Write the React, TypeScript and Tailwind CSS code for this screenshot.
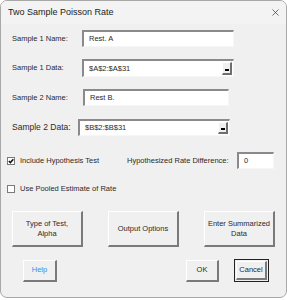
import { X } from 'lucide-react';

const font = { fontFamily: '"Liberation Sans", Arial, sans-serif' };

function TextBox({ value, w, h = 'h-[17px]', picker = false }: { value: string; w: string; h?: string; picker?: boolean }) {
  return (
    <div
      className={`${w} ${h} flex items-stretch bg-white border-t-2 border-l-2 border-b border-r border-t-[#8a8a8a] border-l-[#8a8a8a] border-b-[#f6f6f6] border-r-[#f6f6f6]`}
    >
      <span className="flex-1 pl-[5px] text-[7.5px] leading-none flex items-center text-[#2a2a2a]">{value}</span>
      {picker && (
        <span className="w-[10px] my-[1px] mr-[1px] bg-[#f0f0f0] border-t border-l border-b-2 border-r-2 border-t-white border-l-white border-b-[#6e6e6e] border-r-[#6e6e6e] flex items-end justify-center pb-[2px]">
          <span className="w-[4px] h-[2px] bg-black" />
        </span>
      )}
    </div>
  );
}

function CheckBox({ checked, label }: { checked: boolean; label: string }) {
  return (
    <div className="flex items-center gap-[5px]">
      <span className="w-[8px] h-[8px] bg-white border border-[#7a7a7a] flex items-center justify-center">
        {checked && (
          <svg width="6" height="6" viewBox="0 0 6 6">
            <path d="M0.8 3 L2.4 4.6 L5.3 1.2" stroke="#111" strokeWidth="1.5" fill="none" />
          </svg>
        )}
      </span>
      <span className="text-[7.5px] leading-none text-[#2a2a2a]">{label}</span>
    </div>
  );
}

function Btn({ children, className }: { children: React.ReactNode; className: string }) {
  return (
    <div
      className={`${className} flex items-center justify-center text-center bg-[#f0f0f0] border-t border-l border-b-2 border-r-2 border-t-white border-l-white border-b-[#7a7a7a] border-r-[#7a7a7a] text-[7.5px] leading-[10px]`}
    >
      {children}
    </div>
  );
}

export default function App() {
  return (
    <div className="w-[287px] h-[300px] bg-white" style={font}>
      <div className="w-[287px] h-[298px] rounded-[7px] border border-[#a8a8a8] bg-[#f0f0f0] overflow-hidden flex flex-col">
        <div className="h-[23px] bg-[#f3f3f3] flex items-center justify-between pl-[7px] pr-[5px]">
          <span className="text-[9px] text-[#222]">Two Sample Poisson Rate</span>
          <X className="w-[11px] h-[11px] text-[#333]" strokeWidth={1.5} />
        </div>

        <div className="flex flex-col">
          <div className="flex items-center mt-[6px]">
            <span className="w-[81px] pl-[11px] text-[7.5px] text-[#2a2a2a]">Sample 1 Name:</span>
            <TextBox value="Rest. A" w="w-[152px]" />
          </div>

          <div className="flex items-center mt-[12px]">
            <span className="w-[81px] pl-[11px] text-[7.5px] text-[#2a2a2a]">Sample 1 Data:</span>
            <TextBox value="$A$2:$A$31" w="w-[152px]" h="h-[18px]" picker />
          </div>

          <div className="flex items-center mt-[12px]">
            <span className="w-[82px] pl-[11px] text-[7.5px] text-[#2a2a2a]">Sample 2 Name:</span>
            <TextBox value="Rest B." w="w-[146px]" />
          </div>

          <div className="flex items-center mt-[13px]">
            <span className="w-[77px] pl-[11px] text-[8.5px] text-[#2a2a2a]">Sample 2 Data:</span>
            <TextBox value="$B$2:$B$31" w="w-[152px]" h="h-[17px]" picker />
          </div>

          <div className="flex items-center mt-[16px] pl-[6px]">
            <div className="w-[120px]">
              <CheckBox checked label="Include Hypothesis Test" />
            </div>
            <span className="w-[110px] text-[7.5px] text-[#2a2a2a]">Hypothesized Rate Difference:</span>
            <TextBox value="0" w="w-[37px]" />
          </div>

          <div className="flex items-center mt-[16px] pl-[6px]">
            <CheckBox checked={false} label="Use Pooled Estimate of Rate" />
          </div>

          <div className="flex justify-between mt-[18px] px-[11px] text-[#2a2a2a]">
            <Btn className="w-[71px] h-[36px]">
              Type of Test,
              <br />
              Alpha
            </Btn>
            <Btn className="w-[71px] h-[36px]">Output Options</Btn>
            <Btn className="w-[71px] h-[36px]">
              Enter Summarized
              <br />
              Data
            </Btn>
          </div>

          <div className="flex items-center mt-[12px] pl-[22px] pr-[17px] text-[#2a2a2a]">
            <Btn className="w-[34px] h-[22px] text-[#3a8ee6]">Help</Btn>
            <div className="flex-1" />
            <Btn className="w-[33px] h-[22px]">OK</Btn>
            <div className="ml-[15px] w-[35px] h-[23px] border border-[#222] p-[1px]">
              <Btn className="w-full h-full">Cancel</Btn>
            </div>
          </div>
        </div>
      </div>
    </div>
  );
}
